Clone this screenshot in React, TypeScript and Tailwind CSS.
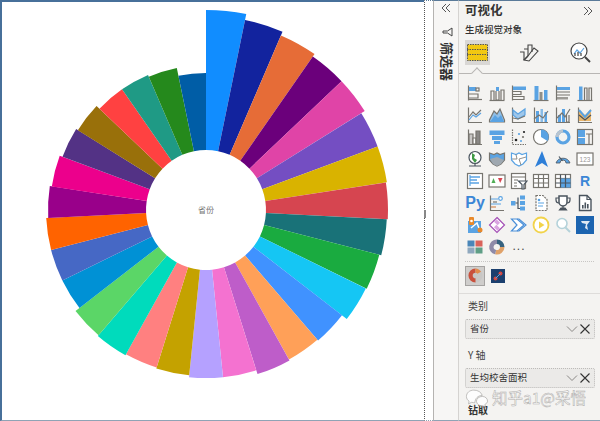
import React from "react";

const slices: [string, number][] = [
  ["#118DFF", 200], ["#12239E", 194], ["#E66C37", 190], ["#6B007B", 187], ["#E044A7", 187], ["#744EC2", 183],
  ["#D9B300", 183], ["#D64550", 182], ["#197278", 181], ["#1AAB40", 179], ["#15C6F4", 178], ["#4092FF", 172],
  ["#FFA058", 171], ["#BE5DC9", 172], ["#F472D0", 168], ["#B5A1FF", 168], ["#C4A200", 166], ["#FF8080", 165],
  ["#00DBBC", 166], ["#5BD667", 165], ["#0091D5", 160], ["#4668C5", 160], ["#FF6300", 160], ["#99008A", 158],
  ["#EC008C", 156], ["#533285", 153], ["#99700A", 151], ["#FF4141", 147], ["#1F9A85", 147], ["#25891C", 145],
  ["#005DA6", 137],
];

function wedge(i: number, r: number) {
  const cx = 206, cy = 210, r0 = 60;
  const step = (Math.PI * 2) / slices.length;
  const a = i * step, b = (i + 1) * step;
  const p = (rad: number, t: number) => `${(cx + rad * Math.sin(t)).toFixed(2)} ${(cy - rad * Math.cos(t)).toFixed(2)}`;
  return `M${p(r0, a)} L${p(r, a)} A${r} ${r} 0 0 1 ${p(r, b)} L${p(r0, b)} A${r0} ${r0} 0 0 0 ${p(r0, a)} Z`;
}

const B = "#5AA3E3";
const G = "#77756F";
const DK = "#4a545e";

function Ic({ children }: { children: React.ReactNode }) {
  return (
    <svg width="18" height="18" viewBox="0 0 18 18" fill="none" strokeWidth="1.2">
      {children}
    </svg>
  );
}

const axisL = <path d="M2.5 1.5V16.5H16" stroke={G} />;
const icons: React.ReactNode[] = [
  // row 1
  <Ic><path d="M2.5 1.5V16.5" stroke={G} /><rect x="3" y="3" width="7" height="4" fill={B} /><rect x="10" y="4" width="3" height="3" fill="none" stroke={G} /><path d="M3 10H12V14H3" stroke={G} /><path d="M3 15.5H16" stroke={G} /></Ic>,
  <Ic><path d="M1.5 16.5H16.5" stroke={G} /><path d="M3 16V7H6V16" stroke={G} /><rect x="8" y="3" width="3" height="4" fill={B} /><path d="M8 7V16H11V7" stroke={G} /><path d="M13 16V6H16V16" stroke={G} /></Ic>,
  <Ic><path d="M2.5 1.5V16.5" stroke={G} /><rect x="3" y="2.5" width="13" height="3.5" fill={B} /><path d="M3 7.5H11V10.5H3M3 12.5H14V15.5H3" stroke={G} /></Ic>,
  <Ic><path d="M1.5 16.5H16.5" stroke={G} /><rect x="2.5" y="2" width="4" height="14" fill={B} /><rect x="7.5" y="8" width="3" height="8" fill={G} opacity=".8" /><rect x="12" y="6" width="3.5" height="10" fill={B} /></Ic>,
  <Ic><path d="M2.5 1.5V16.5" stroke={G} /><rect x="3" y="3" width="13" height="3" fill={B} /><path d="M3 8H16M3 11H16" stroke={G} /><rect x="3" y="13" width="11" height="2.5" fill={G} opacity=".7" /></Ic>,
  <Ic><path d="M1.5 16.5H16.5" stroke={G} /><rect x="3" y="2.5" width="3.5" height="13.5" fill={B} /><path d="M8.5 16V4H11V16" stroke={G} /><path d="M13 16V4H15.5V16" stroke={G} /></Ic>,
  // row 2
  <Ic>{axisL}<path d="M3 11L7 6L10 9L15 4" stroke={G} /><path d="M3 14L7 9L10 11L15 7" stroke={B} /></Ic>,
  <Ic><path d="M1.500 16H16.500V14L12 3L9 8L6 5L1.500 14Z" fill={B} fillOpacity=".65" stroke={G} /><path d="M2 16L7 9L10 12L13 9L16 16Z" fill={B} /></Ic>,
  <Ic>{axisL}<path d="M3 4L8 8L15 3V9L8 13L3 9Z" fill={B} fillOpacity=".55" stroke={B} /><path d="M3 12L8 13L15 10" stroke={G} /></Ic>,
  <Ic>{axisL}<rect x="4" y="5" width="3" height="11" fill={B} /><rect x="8.5" y="3" width="2.5" height="13" fill={B} opacity=".7" /><rect x="12.5" y="6" width="2.5" height="10" fill={B} /><path d="M2 13L7 9L11 12L16 5" stroke={G} /></Ic>,
  <Ic>{axisL}<rect x="4" y="9" width="3" height="7" fill={B} /><rect x="8" y="3" width="3" height="13" fill={B} /><path d="M12.5 9V16H15V9" stroke={G} /><path d="M3 12L8 7L11 11L16 3" stroke={G} /></Ic>,
  <Ic>{axisL}<path d="M3 4L9 9L15 3V15H3Z" fill="#E8A33D" opacity=".75" /><path d="M3 4L9 11L15 4" stroke={B} strokeWidth="2" /><path d="M3 9L9 14L15 9" stroke={DK} /></Ic>,
  // row 3
  <Ic>{axisL}<path d="M3 16V6H7V16" stroke={G} fill="#c8c6c4" /><path d="M7 10H10V16H7Z" fill="#fff" stroke={G} /><path d="M10 3H14V16H10Z" fill="#8a8886" stroke={G} /></Ic>,
  <Ic><path d="M1.500 2.500H16.500V7H1.500Z" fill={B} /><path d="M4 8H14V12H4Z" fill={B} /><path d="M6 13H12V16H6Z" fill={B} /></Ic>,
  <Ic><path d="M2.500 1.500V16.500H16" stroke={G} strokeDasharray="1.500 1" /><circle cx="6" cy="12" r="1.300" fill="#222" /><circle cx="9" cy="6" r="1.100" fill={B} /><circle cx="13" cy="9" r="1.100" fill={G} /><circle cx="14" cy="4" r="1.100" fill="#222" /><circle cx="11" cy="13" r="1" fill={B} /></Ic>,
  <Ic><circle cx="9" cy="9" r="7.500" stroke={G} fill="#fff" /><path d="M9 9V1.500A7.500 7.500 0 0 1 15.500 13Z" fill={B} /></Ic>,
  <Ic><circle cx="9" cy="9" r="6" stroke={B} strokeWidth="3.200" /><path d="M3 9A6 6 0 0 1 9 3" stroke="#b9c4cf" strokeWidth="3.200" /></Ic>,
  <Ic><rect x="1.500" y="1.500" width="15" height="15" stroke={G} /><rect x="2" y="2" width="7" height="7" fill={B} /><rect x="2" y="10" width="7" height="6" fill={B} /><path d="M10 6H16M13 6V16" stroke={G} /></Ic>,
  // row 4
  <Ic><circle cx="9" cy="7.500" r="6" fill="#fff" stroke={DK} /><path d="M6 3L9 5L8 8L11 10L9 13L6 9Z" fill="#3f9a45" /><path d="M3 16H15M9 13.500V16" stroke={DK} /></Ic>,
  <Ic><path d="M1.500 3L6 4.500L9 3L12 4.500L16.500 3V10L13 14L9 16L5 14L1.500 10Z" fill={B} stroke={G} /><path d="M2 9L9 7L16 10L13 14L9 16L5 14Z" fill="#9fa8b0" /></Ic>,
  <Ic><path d="M1.500 3L6 4.500L9 3L12 4.500L16.500 3V10L13 14L9 16L5 14L1.500 10Z" fill="#fff" stroke={B} /><path d="M6 4.500L7 9L2 9M9 9L16 7M9 9L11 15" stroke={G} strokeWidth=".8" /></Ic>,
  <Ic><path d="M10 1L16 17L10 13L3 17Z" fill="#2E7FD8" /></Ic>,
  <Ic><path d="M2 13A7.500 7.500 0 0 1 16 13H12A3 3 0 0 0 6 13Z" fill={B} stroke={DK} strokeWidth=".8" /><path d="M5 6.500L8.500 11" stroke={DK} /></Ic>,
  <Ic><rect x="1" y="3" width="16" height="12" stroke={G} fill="#fff" /><text x="9" y="11.500" fontSize="6.500" fill="#9a9896" textAnchor="middle" fontFamily="Liberation Sans">123</text></Ic>,
  // row 5
  <Ic><rect x="1.500" y="1.500" width="15" height="15" stroke={G} fill="#fff" /><path d="M4 5H14M4 8H11M4 11H13" stroke={B} strokeWidth="1.500" /><path d="M4 3V14" stroke={B} /></Ic>,
  <Ic><rect x="1" y="3" width="16" height="12" stroke={G} fill="#fff" /><path d="M3.500 11L5.500 6L7.500 11Z" fill="#4fae55" /><path d="M10 6H14.500L12.200 11Z" fill="#d64550" /></Ic>,
  <Ic><rect x="1.500" y="1.500" width="14" height="15" stroke={G} fill="#fff" /><path d="M1.500 5H15.500M4 8H8M4 11H7M4 14H7" stroke={G} /><path d="M8.500 9H17L14 12.500V17H12V12.500Z" fill="#fff" stroke={DK} /></Ic>,
  <Ic><rect x="1.500" y="2.500" width="15" height="13" stroke={G} fill="#fff" /><path d="M1.500 6.500H16.500M1.500 11H16.500M6.500 2.500V15.500M11.500 2.500V15.500" stroke={G} /></Ic>,
  <Ic><rect x="1.500" y="2.500" width="15" height="13" stroke={G} fill="#fff" /><path d="M1.500 6.500H16.500" stroke={G} /><rect x="6.500" y="6.500" width="10" height="9" fill={B} /><path d="M1.500 11H16.500M6.500 2.500V15.500M11.500 2.500V15.500" stroke={DK} /></Ic>,
  <div className="text-[14px] leading-none font-bold text-[#3B86D6] font-['Liberation_Sans',sans-serif]">R</div>,
  // row 6
  <div className="text-[16px] leading-none font-bold text-[#3B86D6] font-['Liberation_Sans',sans-serif]">Py</div>,
  <Ic><path d="M2.500 1.500V16.500H16" stroke={G} /><path d="M3 5H10M3 10H13" stroke={B} /><circle cx="12.500" cy="4.500" r="1.800" fill="#fff" stroke={B} /><path d="M3 13H8" stroke="#d08a5a" /><path d="M5 8H9" stroke={G} /></Ic>,
  <Ic><rect x="1" y="7" width="4.500" height="4.500" fill={B} /><path d="M5.500 9H8M8 3.500V14.500H10" stroke={DK} /><rect x="10" y="1.500" width="5" height="4" fill={B} /><rect x="10" y="7" width="5" height="4" fill={B} /><rect x="10" y="12.500" width="5" height="4" fill={B} /></Ic>,
  <Ic><path d="M4 1.500H11L15 5.500V16.500H4Z" stroke={G} strokeDasharray="2 1" fill="#fff" /><path d="M6 9H12M6 12H11" stroke={B} /><circle cx="7" cy="6" r="1.300" fill={B} /></Ic>,
  <Ic><path d="M5 2H13V8A4 4 0 0 1 5 8Z" fill="#fff" stroke={DK} strokeWidth="1.500" /><path d="M5 4H2V6A3 3 0 0 0 5 9M13 4H16V6A3 3 0 0 1 13 9" stroke={DK} /><path d="M9 12V14M5.500 16H12.500L11 14H7Z" fill={DK} stroke={DK} /></Ic>,
  <Ic><path d="M3.500 1.500H11L15 5.500V16.500H3.500Z" stroke={DK} strokeWidth="1.400" fill="#fff" /><path d="M11 1.500V5.500H15" stroke={DK} /><rect x="6" y="11" width="1.600" height="3.500" fill={DK} /><rect x="8.500" y="8.500" width="1.600" height="6" fill={DK} /><rect x="11" y="10" width="1.600" height="4.500" fill={DK} /></Ic>,
  // row 7
  <Ic><rect x="2" y="5" width="13" height="12" fill={B} /><path d="M5 12L11 7L14 15" stroke="#fff" strokeWidth="1.500" /><rect x="3" y="1" width="5" height="8" rx="1" fill="#E8892B" /><circle cx="5.500" cy="5" r="1.300" fill="#fff" /><circle cx="14" cy="14" r="2.500" fill="#E8892B" /></Ic>,
  <Ic><path d="M9 1.500L16.500 9L9 16.500L1.500 9Z" stroke="#A34FB5" fill="#fff" /><rect x="6.500" y="4.500" width="5" height="3.500" fill="#D9A4E0" transform="rotate(45 9 6.300)" /><rect x="6.500" y="10" width="5" height="3.500" fill="#D9A4E0" transform="rotate(45 9 11.700)" /></Ic>,
  <Ic><path d="M1.500 3H9L16 9L9 15H1.500L7 9Z" stroke="#4A8FD8" fill="#fff" /><path d="M7 3L14 9L7 15" stroke="#4A8FD8" /></Ic>,
  <Ic><circle cx="9" cy="9" r="7.500" stroke="#F2D34A" strokeWidth="1.800" fill="#fff" /><path d="M7 5.500L12.500 9L7 12.500Z" fill="#F2D34A" /></Ic>,
  <Ic><circle cx="8" cy="7.500" r="5" stroke="#B4D2DA" strokeWidth="1.600" fill="#fff" /><path d="M11.500 11.500L16 16" stroke="#B4D2DA" strokeWidth="2" /></Ic>,
  <Ic><rect x="0" y="0" width="18" height="18" fill="#1C64B0" /><path d="M5 5H14L11 9L12 14L9 12L10 8L6 7Z" fill="#fff" fillOpacity=".85" /></Ic>,
  // row 8
  <Ic><rect x="1.500" y="2.500" width="7" height="6" fill="#4A86B8" /><rect x="9.500" y="2.500" width="7" height="6" fill="#D9635B" /><rect x="1.500" y="9.500" width="7" height="6" fill="#8FA8BE" /><rect x="9.500" y="9.500" width="7" height="6" fill="#5F9E86" /></Ic>,
  <Ic><path d="M9 1.500A7.500 7.500 0 0 1 16.500 9H12A3 3 0 0 0 9 6Z" fill="#36627F" /><path d="M16.500 9A7.500 7.500 0 0 1 7 16.300L8.200 12A3 3 0 0 0 12 9Z" fill="#E0A26A" /><path d="M7 16.300A7.500 7.500 0 0 1 9 1.500V6A3 3 0 0 0 8.200 12Z" fill="#8E8AA8" /></Ic>,
  <div className="text-[12px] leading-none text-[#444] tracking-[1px] -mt-[2px] font-['Liberation_Sans',sans-serif]">...</div>,
];

function FieldWell({ text }: { text: string }) {
  return (
    <div className="h-[20px] border border-dotted border-[#bdbbb9] bg-[#ebeae8] flex items-center pl-[4px] pr-[2px] rounded-[2px]">
      <span className="flex-1 text-[9.5px] text-[#333] leading-none">{text}</span>
      <svg width="12" height="8" viewBox="0 0 12 8" fill="none" stroke="#8a8886" strokeWidth="1"><path d="M1 1.500L6 6.500L11 1.500" /></svg>
      <svg width="12" height="12" viewBox="0 0 12 12" fill="none" stroke="#333" strokeWidth="1.100" className="ml-[1px] mr-[1px]"><path d="M1.500 1.500L10.500 10.500M10.500 1.500L1.500 10.500" /></svg>
    </div>
  );
}

function Chevrons({ left }: { left?: boolean }) {
  return (
    <svg width="10" height="10" viewBox="0 0 10 10" fill="none" stroke="#555" strokeWidth="1">
      <path d={left ? "M5 1L1 5L5 9M9 1L5 5L9 9" : "M1 1L5 5L1 9M5 1L9 5L5 9"} />
    </svg>
  );
}

export default function App() {
  return (
    <div className="w-[600px] h-[421px] flex overflow-hidden bg-white font-['Noto_Sans_CJK_SC','Liberation_Sans',sans-serif]">
      <div className="w-[424px] h-[421px] border-t-2 border-l-2 border-b border-t-[#47709A] border-l-[#47709A] border-b-[#8fa3b5] shrink-0">
        <svg width="422" height="418" viewBox="2 2 422 418" className="block">
          {slices.map(([c, r], i) => (
            <path key={i} d={wedge(i, r)} fill={c} />
          ))}
          <text x="206" y="213" fontSize="8" fill="#777" textAnchor="middle" fontFamily="Noto Sans CJK SC">省份</text>
        </svg>
      </div>
      <div className="relative w-[9px] h-[421px] shrink-0 border-l border-dotted border-l-[#555] border-t border-t-[#5a7a99] border-b border-b-[#8fa3b5]">
        <div className="absolute -left-[1px] top-[209px] w-[2px] h-[8px] bg-[#888]" />
      </div>
      <div className="w-[25px] h-[421px] shrink-0 bg-[#f7f6f5] border-l border-l-[#b5b3b1] border-t border-t-[#5a7a99] border-b border-b-[#8fa3b5] flex flex-col items-center pt-[2px]">
        <Chevrons left />
        <svg width="11" height="10" viewBox="0 0 11 10" fill="none" stroke="#444" strokeWidth="1" className="mt-[14px] ml-[3px]">
          <path d="M10 1V9L5.500 6H1V4H5.500Z" />
        </svg>
        <div className="mt-[5px] ml-[2px] [writing-mode:vertical-rl] [text-orientation:sideways] text-[13px] leading-none font-bold text-[#333]">筛选器</div>
      </div>
      <div className="relative w-[142px] h-[421px] shrink-0 bg-[#f4f3f1] border-l border-l-[#d5d3d1] border-t border-t-[#5a7a99] border-b border-b-[#8fa3b5] px-[6px]">
        <div className="flex items-center justify-between h-[19px] pr-[1px]">
          <span className="text-[12.5px] leading-none font-bold text-[#333]">可视化</span>
          <Chevrons />
        </div>
        <div className="text-[9.5px] leading-none font-medium text-[#333] mt-[5px]">生成视觉对象</div>
        <div className="flex items-center mt-[5px] h-[25px]">
          <div className="w-[25px] h-[25px] bg-[#d9d7d5] flex items-center justify-center">
            <svg width="21" height="17" viewBox="0 0 21 17">
              <rect x="0.500" y="0.500" width="20" height="16" fill="#F2C811" stroke="#555" strokeDasharray="1.500 1" />
              <path d="M0 5.500H21M0 10.500H21" stroke="#555" strokeDasharray="1.500 1" />
            </svg>
          </div>
          <svg width="22" height="22" viewBox="0 0 22 22" fill="none" stroke="#444" strokeWidth="1.100" className="ml-[28px]">
            <path d="M2 11H6V19M6 8H10V15M10 8V4H14V11" />
            <path d="M6 19L11 20L20 10L16 7L10 15Z" />
            <path d="M6 19L10 15" />
          </svg>
          <svg width="22" height="22" viewBox="0 0 22 22" fill="none" stroke="#444" strokeWidth="1.200" className="ml-[29px]">
            <circle cx="10" cy="10" r="8" fill="#fff" />
            <path d="M5 13L8 9L11 12L15 7" stroke="#5AA3E3" />
            <path d="M6 15V12M9 15V11M12 15V12" stroke="#444" />
            <path d="M16 16L21 21" strokeWidth="2" />
          </svg>
        </div>
        <div className="relative -mx-[6px] mt-[8px] h-[1px] bg-[#b8b6b4]">
          <div className="absolute left-[14px] -top-[4px] w-[8px] h-[8px] rotate-45 bg-[#f4f3f1] border-l border-t border-[#b8b6b4]" />
        </div>
        <div className="grid grid-cols-[repeat(6,22px)] auto-rows-[22px] mt-[8px] -ml-[1px]">
          {icons.map((ic, i) => (
            <div key={i} className="flex items-center justify-center">{ic}</div>
          ))}
        </div>
        <div className="border-t border-dotted border-[#c8c6c4] mt-[3px]" />
        <div className="flex items-center mt-[4px] h-[20px]">
          <div className="w-[20px] h-[20px] bg-[#cfcdcb] border border-[#a5a3a1] flex items-center justify-center">
            <svg width="15" height="15" viewBox="0 0 16 16">
              <circle cx="8" cy="8" r="7.500" fill="#c9c7c5" />
              <path d="M8 .5A7.500 7.500 0 0 0 8 15.500V11A3 3 0 0 1 8 5Z" fill="#C9503C" />
              <path d="M8 .5A7.500 7.500 0 0 1 14 4L10 6A3 3 0 0 0 8 5Z" fill="#E28B4B" />
            </svg>
          </div>
          <div className="w-[14px] h-[14px] bg-[#1B3F6E] ml-[6px] flex items-center justify-center">
            <svg width="12" height="12" viewBox="0 0 12 12">
              <circle cx="3.500" cy="8.500" r="2" fill="#D9453C" />
              <circle cx="8.500" cy="3.500" r="2" fill="#D9453C" />
              <path d="M3.500 8.500L8.500 3.500" stroke="#5AA3E3" />
            </svg>
          </div>
        </div>
        <div className="-mx-[6px] border-t border-[#dedcda] mt-[7px]" />
        <div className="text-[10px] leading-none text-[#444] mt-[7px] pl-[3px]">类别</div>
        <div className="mt-[8px] mr-[-1px]"><FieldWell text="省份" /></div>
        <div className="text-[10px] leading-none text-[#444] mt-[11px] pl-[3px]">Y 轴</div>
        <div className="mt-[8px] mr-[-1px]"><FieldWell text="生均校舍面积" /></div>
        <div className="text-[10px] leading-none font-bold text-[#333] mt-[17px] pl-[3px]">钻取</div>
        <div className="absolute left-[6px] top-[387px] flex items-center text-[15.5px] leading-none text-white [-webkit-text-stroke:0.5px_#a8a6a4] opacity-90">
          <svg width="24" height="19" viewBox="0 0 22 18" fill="#fff" stroke="#b0aeac" strokeWidth=".8">
            <path d="M8 2C4 2 1 4.500 1 8C1 10 2 11.500 3.500 12.500L3 15L6 13.500C7 13.800 8 14 9 14C9 10 12 7 16 7C15 4 12 2 8 2Z" />
            <path d="M16 8C13 8 10.500 10 10.500 12.500C10.500 15 13 17 16 17L19 17.500L18.500 15.500C20 14.700 21 13.700 21 12.500C21 10 19 8 16 8Z" />
          </svg>
          <span className="ml-[3px] whitespace-nowrap">知乎a1@采悟</span>
        </div>
      </div>
    </div>
  );
}
